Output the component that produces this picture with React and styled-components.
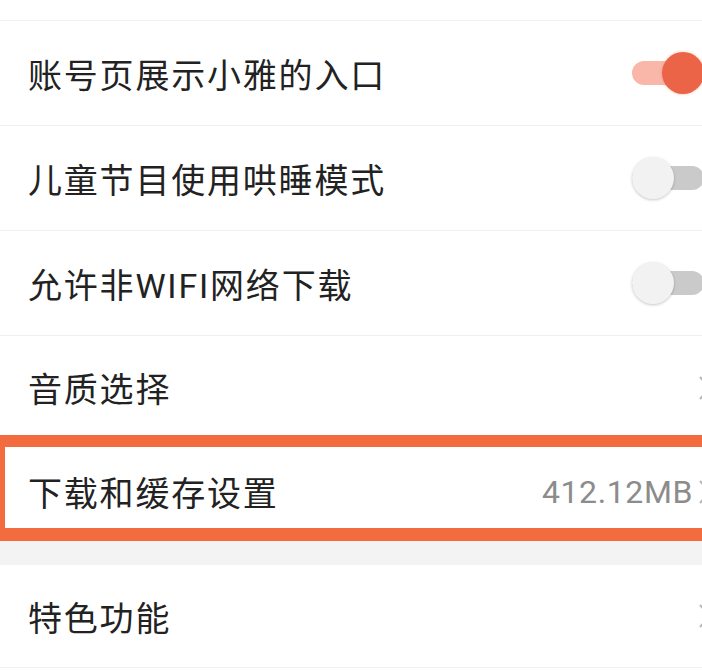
import React from 'react';
import styled, { createGlobalStyle } from 'styled-components';

const GlobalStyle = createGlobalStyle`
  html, body {
    margin: 0;
    padding: 0;
    background: #ffffff;
    overflow: hidden;
  }
  body {
    font-family: Roboto, "Noto Sans CJK SC", "Noto Sans", sans-serif;
  }
`;

const Page = styled.div`
  width: 702px;
  height: 670px;
  overflow: hidden;
  background: #ffffff;
`;

const TopSpacer = styled.div`
  height: 20px;
  border-bottom: 1px solid #f0f0f0;
`;

const Row = styled.div`
  height: ${(p) => p.h || 104}px;
  display: flex;
  align-items: center;
  justify-content: space-between;
  padding-left: 28px;
  padding-top: ${(p) => p.pt || 0}px;
  background: #ffffff;
  border-bottom: ${(p) => (p.noLine ? 'none' : '1px solid #f0f0f0')};
`;

const HighlightRow = styled(Row)`
  border: 12px solid #f26c40;
  border-bottom-width: 13px;
  border-left-width: 5px;
  border-right: none;
  padding-left: 23px;
`;

const Label = styled.span`
  font-size: 34px;
  color: #222222;
  letter-spacing: 1.8px;
`;

const Right = styled.div`
  display: flex;
  align-items: center;
  gap: 5px;
  margin-right: -10px;
`;

const Value = styled.span`
  font-size: 32px;
  color: #8c8c8c;
  letter-spacing: 0.6px;
`;

const Chevron = styled.svg`
  width: 14px;
  height: 26px;
  flex-shrink: 0;
`;

const Gap = styled.div`
  height: 24px;
  background: #f3f3f3;
`;

const Toggle = styled.div`
  position: relative;
  width: 72px;
  height: 44px;
  flex-shrink: 0;
  margin-right: -2px;
`;

const Track = styled.div`
  position: absolute;
  left: 0;
  right: 0;
  top: 10px;
  height: 24px;
  border-radius: 12px;
  background: ${(p) => (p.on ? '#f8b7a9' : '#cacaca')};
`;

const Thumb = styled.div`
  position: absolute;
  top: 1px;
  left: ${(p) => (p.on ? '30px' : '0')};
  width: 42px;
  height: 42px;
  border-radius: 50%;
  background: ${(p) => (p.on ? '#ec6447' : '#f2f2f2')};
  box-shadow: ${(p) =>
    p.on ? '0 0 3px rgba(236, 100, 71, 0.45)' : '0 1px 3px rgba(0, 0, 0, 0.22)'};
`;

const Switch = ({ on }) => (
  <Toggle>
    <Track on={on} />
    <Thumb on={on} />
  </Toggle>
);

const Arrow = () => (
  <Chevron viewBox="0 0 14 26">
    <path d="M2 2 L12 13 L2 24" fill="none" stroke="#b5b5b5" strokeWidth="2" />
  </Chevron>
);

export default function App() {
  return (
    <Page>
      <GlobalStyle />
      <TopSpacer />
      <Row>
        <Label>账号页展示小雅的入口</Label>
        <Switch on />
      </Row>
      <Row>
        <Label>儿童节目使用哄睡模式</Label>
        <Switch />
      </Row>
      <Row>
        <Label>允许非WIFI网络下载</Label>
        <Switch />
      </Row>
      <Row h={95} pt={4} noLine>
        <Label>音质选择</Label>
        <Right>
          <Arrow />
        </Right>
      </Row>
      <HighlightRow h={73} pt={8}>
        <Label>下载和缓存设置</Label>
        <Right>
          <Value>412.12MB</Value>
          <Arrow />
        </Right>
      </HighlightRow>
      <Gap />
      <Row h={102}>
        <Label>特色功能</Label>
        <Right>
          <Arrow />
        </Right>
      </Row>
    </Page>
  );
}
